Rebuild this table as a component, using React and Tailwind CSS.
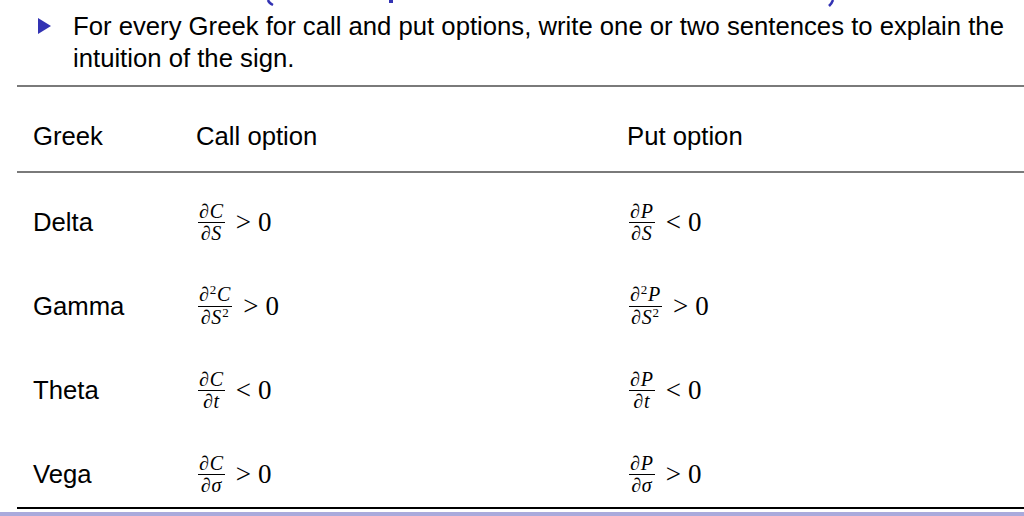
import React from "react";

const SANS = { fontFamily: '"Liberation Sans", Arial, sans-serif' };
const SERIF = { fontFamily: '"Liberation Serif", "Times New Roman", serif' };

function Frac({ num, den }) {
  return (
    <span className="inline-flex flex-col items-center leading-[15px] text-[20px] tracking-[0.8px]" style={SERIF}>
      <span className="px-[1px] pb-[3px]">{num}</span>
      <span className="h-[1px] w-full bg-black"></span>
      <span className="px-[1px] pt-[3px]">{den}</span>
    </span>
  );
}

function Sq() {
  return <span className="relative -top-[7px] text-[13px] leading-none">2</span>;
}

function Expr({ num, den, rel }) {
  return (
    <span className="flex items-center">
      <Frac num={num} den={den} />
      <span className="ml-[11px] text-[27px] leading-none" style={SERIF}>
        {rel}
        <span className="ml-[7px]">0</span>
      </span>
    </span>
  );
}

const d = "\u2202";

const rows = [
  {
    name: "Delta",
    call: { num: <>{d}<i>C</i></>, den: <>{d}<i>S</i></>, rel: ">" },
    put: { num: <>{d}<i>P</i></>, den: <>{d}<i>S</i></>, rel: "<" },
  },
  {
    name: "Gamma",
    call: { num: <>{d}<Sq /><i>C</i></>, den: <>{d}<i>S</i><Sq /></>, rel: ">" },
    put: { num: <>{d}<Sq /><i>P</i></>, den: <>{d}<i>S</i><Sq /></>, rel: ">" },
  },
  {
    name: "Theta",
    call: { num: <>{d}<i>C</i></>, den: <>{d}<i>t</i></>, rel: "<" },
    put: { num: <>{d}<i>P</i></>, den: <>{d}<i>t</i></>, rel: "<" },
  },
  {
    name: "Vega",
    call: { num: <>{d}<i>C</i></>, den: <>{d}<i>σ</i></>, rel: ">" },
    put: { num: <>{d}<i>P</i></>, den: <>{d}<i>σ</i></>, rel: ">" },
  },
];

export default function App() {
  return (
    <div className="relative w-[1024px] h-[516px] bg-white overflow-hidden flex flex-col text-black" style={SANS}>
      <svg className="absolute left-0 top-0" width="1024" height="8" viewBox="0 0 1024 8">
        <path d="M268 0 Q269 3 273 5" stroke="#3333b3" strokeWidth="2.5" fill="none" />
        <rect x="389" y="0" width="4" height="3" fill="#3333b3" />
        <path d="M833 0 Q832 3 829 6" stroke="#3333b3" strokeWidth="2.5" fill="none" />
      </svg>

      <div className="flex items-start pl-[38px] pt-[10px] h-[86px]">
        <svg width="13" height="16" viewBox="0 0 13 16" className="mt-[8px] shrink-0">
          <polygon points="0,0 13,8 0,16" fill="#3333b3" />
        </svg>
        <p className="ml-[22px] text-[25.7px] leading-[32px] w-[945px]">
          For every Greek for call and put options, write one or two sentences to explain the intuition of the sign.
        </p>
      </div>

      <div className="ml-[17px] flex flex-col">
        <div className="h-[2px] bg-[#7a7a7a]"></div>
        <div className="h-[84px] pt-[14px] flex items-center text-[25.7px]">
          <div className="w-[179px] pl-[16px]">Greek</div>
          <div className="w-[431px]">Call option</div>
          <div>Put option</div>
        </div>
        <div className="h-[2px] bg-[#7a7a7a]"></div>
        {rows.map((r) => (
          <div key={r.name} className="h-[84px] pt-[14px] flex items-center text-[25.7px]">
            <div className="w-[179px] pl-[16px]">{r.name}</div>
            <div className="w-[431px] pl-[2px] flex items-center">
              <Expr {...r.call} />
            </div>
            <div className="pl-[2px] flex items-center">
              <Expr {...r.put} />
            </div>
          </div>
        ))}
        <div className="h-[2px] bg-black -mt-[2px]"></div>
      </div>
      <div className="mt-[3px] h-[4px] bg-[#aaaadc]"></div>
    </div>
  );
}
